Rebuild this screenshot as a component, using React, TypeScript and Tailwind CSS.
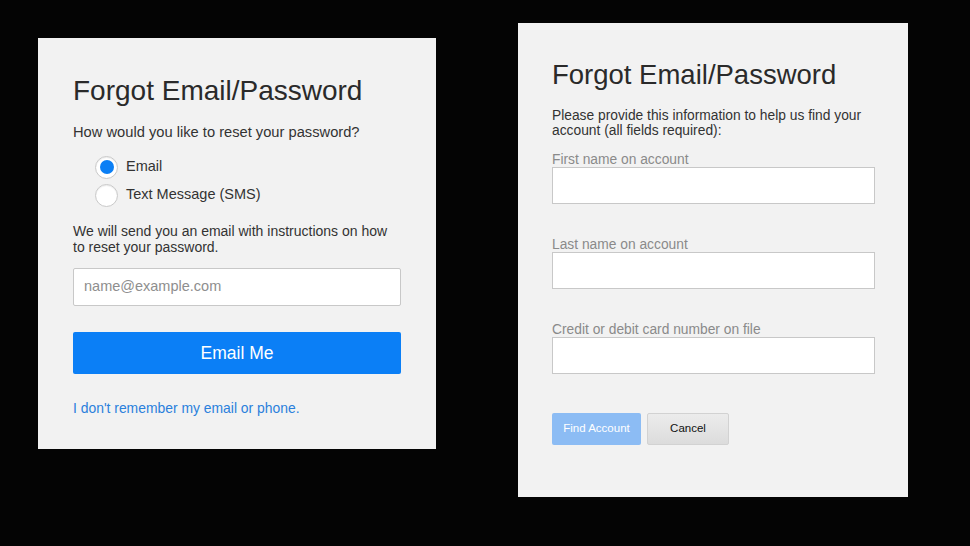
const font = { fontFamily: '"Liberation Sans", Arial, sans-serif' };

const Radio = ({ checked, label }: { checked?: boolean; label: string }) => (
  <label className="flex h-[28px] items-center gap-[8px]">
    <span className="flex h-[23px] w-[23px] items-center justify-center rounded-full border border-[#c9c9c9] bg-white shadow-[inset_0_1px_1px_rgba(0,0,0,0.08)]">
      {checked && <span className="h-[14px] w-[14px] rounded-full bg-[#0b7ff5]" />}
    </span>
    <span className="text-[14.5px] text-[#333]">{label}</span>
  </label>
);

const Field = ({ label, first }: { label: string; first?: boolean }) => (
  <div className={first ? "mt-[14px]" : "mt-[33px]"}>
    <div className="h-[15px] text-[13.8px] leading-[15px] text-[#8a8a8a]">{label}</div>
    <div className="h-[37px] w-[323px] border border-[#c8c8c8] bg-white" />
  </div>
);

export default function App() {
  return (
    <div className="flex h-[546px] w-[970px] items-start overflow-hidden bg-[#040404]" style={font}>
      {/* left dialog */}
      <div className="ml-[38px] mt-[38px] h-[411px] w-[398px] bg-[#f2f2f2] px-[35px] pt-[37px]">
        <h1 className="text-[28px] leading-[32px] text-[#2a2a2a]">Forgot Email/Password</h1>
        <p className="mt-[17px] text-[14.7px] leading-[16px] text-[#333]">
          How would you like to reset your password?
        </p>
        <div className="ml-[22px] mt-[13px]">
          <Radio checked label="Email" />
          <Radio label="Text Message (SMS)" />
        </div>
        <p className="mt-[14px] text-[14px] leading-[16px] text-[#333]">
          We will send you an email with instructions on how to reset your password.
        </p>
        <div className="mt-[13px] flex h-[38px] w-[328px] items-center rounded-[2px] border border-[#c8c8c8] bg-white px-[10px] text-[14.5px] text-[#8e8e8e]">
          name@example.com
        </div>
        <button className="mt-[26px] flex h-[42px] w-[328px] items-center justify-center rounded-[2px] bg-[#0b7ff6] text-[17.5px] text-white">
          Email Me
        </button>
        <a className="mt-[26px] block text-[13.9px] leading-[16px] text-[#2a80dc]">
          I don't remember my email or phone.
        </a>
      </div>

      {/* right dialog */}
      <div className="ml-[82px] mt-[23px] h-[474px] w-[390px] bg-[#f2f2f2] px-[34px] pt-[36px]">
        <h1 className="text-[27.5px] leading-[32px] text-[#2a2a2a]">Forgot Email/Password</h1>
        <p className="mt-[17px] text-[13.8px] leading-[15px] text-[#333]">
          Please provide this information to help us find your account (all fields required):
        </p>
        <Field first label="First name on account" />
        <Field label="Last name on account" />
        <Field label="Credit or debit card number on file" />
        <div className="mt-[39px] flex gap-[6px]">
          <button className="h-[32px] w-[89px] rounded-[2px] bg-[#8cbcf4] text-[11.5px] text-white">
            Find Account
          </button>
          <button className="h-[32px] w-[82px] rounded-[2px] border border-[#d2d2d2] bg-gradient-to-b from-[#ececec] to-[#dcdcdc] text-[11.5px] text-[#111]">
            Cancel
          </button>
        </div>
      </div>
    </div>
  );
}
